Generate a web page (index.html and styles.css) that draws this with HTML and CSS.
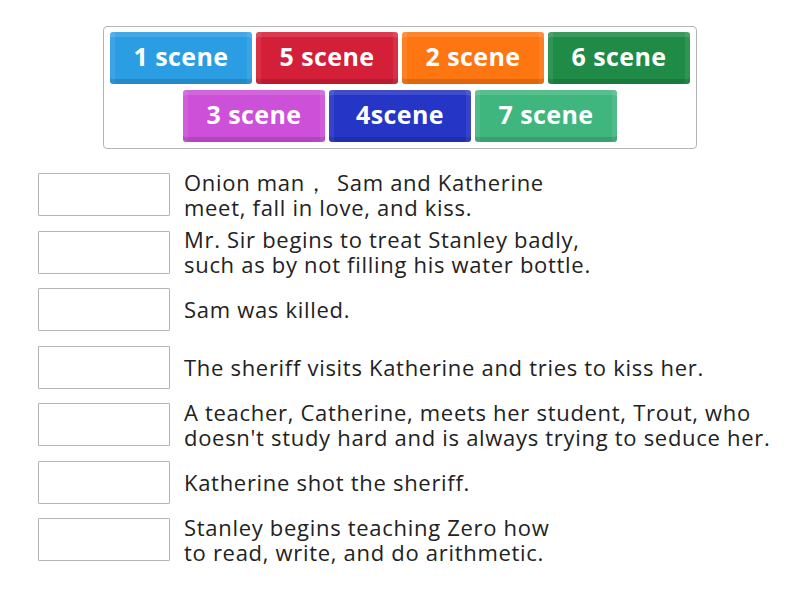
FILE: index.html
```html
<!DOCTYPE html>
<html>
<head>
<meta charset="utf-8">
<link rel="stylesheet" href="styles.css">
</head>
<body>
<div class="page">
  <div class="bank">
    <div class="tile blue">1 scene</div>
    <div class="tile red">5 scene</div>
    <div class="tile orange">2 scene</div>
    <div class="tile green">6 scene</div>
    <div class="tile purple">3 scene</div>
    <div class="tile navy">4scene</div>
    <div class="tile teal">7 scene</div>
  </div>
  <div class="rows">
    <div class="row"><div class="slot"></div><div class="txt">Onion man<span class="cjk">，　</span>Sam and Katherine<br>meet, fall in love, and kiss.</div></div>
    <div class="row"><div class="slot"></div><div class="txt">Mr. Sir begins to treat Stanley badly,<br>such as by not filling his water bottle.</div></div>
    <div class="row"><div class="slot"></div><div class="txt">Sam was killed.</div></div>
    <div class="row"><div class="slot"></div><div class="txt">The sheriff visits Katherine and tries to kiss her.</div></div>
    <div class="row"><div class="slot"></div><div class="txt">A teacher, Catherine, meets her student, Trout, who<br>doesn't study hard and is always trying to seduce her.</div></div>
    <div class="row"><div class="slot"></div><div class="txt">Katherine shot the sheriff.</div></div>
    <div class="row"><div class="slot"></div><div class="txt">Stanley begins teaching Zero how<br>to read, write, and do arithmetic.</div></div>
  </div>
</div>
</body>
</html>
```

FILE: styles.css
```css
html, body {
  margin: 0;
  padding: 0;
  background: #ffffff;
}
body {
  font-family: "Open Sans", "Noto Sans", sans-serif;
  color: #222222;
}
.page {
  width: 800px;
  height: 600px;
  padding-top: 26px;
  box-sizing: border-box;
}
.bank {
  width: 594px;
  margin-left: 103px;
  box-sizing: border-box;
  border: 1px solid #b4b4b4;
  border-radius: 4px;
  padding: 5px 6px 6px 6px;
  display: flex;
  flex-wrap: wrap;
  justify-content: center;
  column-gap: 4px;
  row-gap: 6px;
}
.tile {
  width: 142px;
  height: 52px;
  box-sizing: border-box;
  border-radius: 3px;
  display: flex;
  align-items: center;
  justify-content: center;
  color: #ffffff;
  font-weight: 700;
  font-size: 25px;
  letter-spacing: 0.4px;
  padding-bottom: 5px;
  box-shadow: inset 0 -5px 0 rgba(0,0,0,0.12), inset 0 5px 0 rgba(255,255,255,0.12), inset 5px 0 0 rgba(255,255,255,0.08), inset -5px 0 0 rgba(255,255,255,0.08);
}
.blue { background: #2b9de3; }
.red { background: #d41f38; }
.orange { background: #fd7611; }
.green { background: #1f8b47; }
.purple { background: #cc50d8; }
.navy { background: #2535c5; }
.teal { background: #40b67f; }
.rows {
  margin-top: 24px;
  margin-left: 38px;
  display: flex;
  flex-direction: column;
  gap: 14.5px;
}
.row {
  display: flex;
  align-items: center;
  height: 43px;
}
.slot {
  width: 132px;
  height: 43px;
  box-sizing: border-box;
  border: 1px solid #b4b4b4;
  border-radius: 1px;
  flex: none;
}
.txt {
  margin-left: 14px;
  font-size: 22px;
  letter-spacing: 0.7px;
  line-height: 25px;
  white-space: nowrap;
}
.cjk {
  letter-spacing: -6px;
}
```
